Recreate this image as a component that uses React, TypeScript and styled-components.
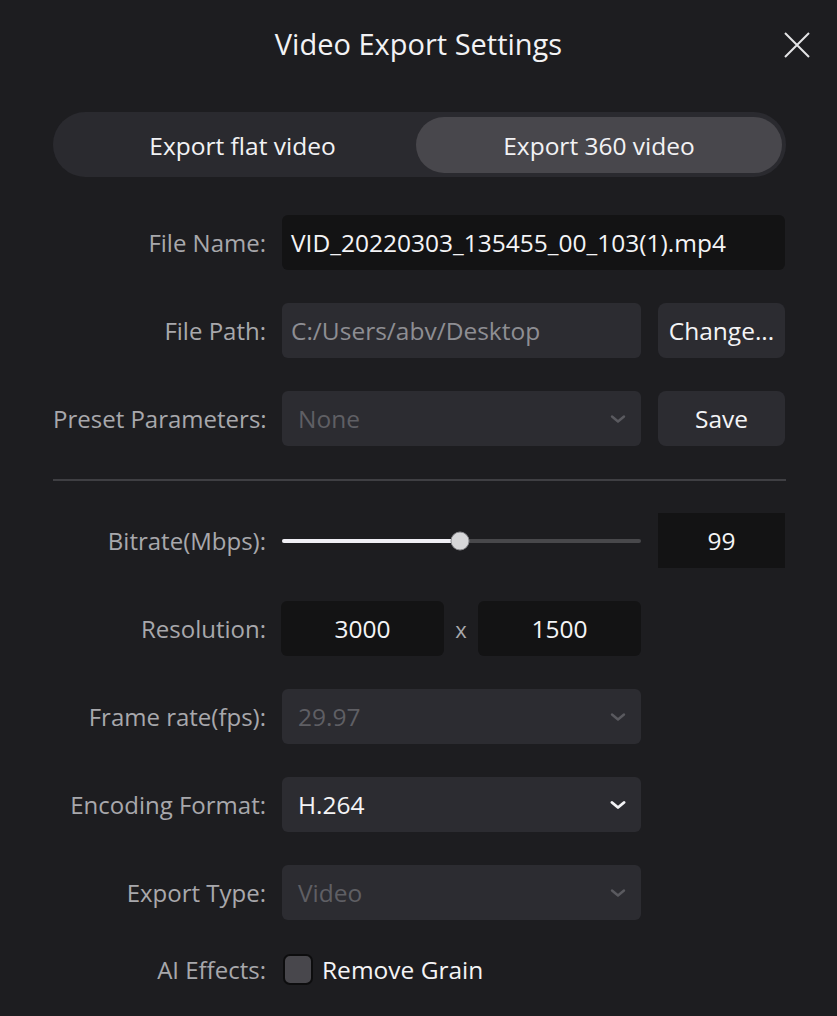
import React from "react";
import styled, { createGlobalStyle } from "styled-components";

const Global = createGlobalStyle`
  html, body { margin: 0; padding: 0; background: #1d1d20; }
  body { font-family: "Open Sans", "Noto Sans", sans-serif; -webkit-font-smoothing: antialiased; }
  * { box-sizing: border-box; }
`;

const Dialog = styled.div`
  width: 837px;
  height: 1016px;
  background: #1d1d20;
  padding: 0 51px 0 53px;
  display: flex;
  flex-direction: column;
  overflow: hidden;
`;

const Header = styled.div`
  position: relative;
  height: 90px;
  padding-bottom: 4px;
  display: flex;
  align-items: center;
  justify-content: center;
  margin: 0 -51px 0 -53px;
`;

const Title = styled.h1`
  margin: 0;
  font-size: 29px;
  font-weight: 400;
  color: #f2f2f4;
  letter-spacing: 0;
`;

const CloseButton = styled.button`
  position: absolute;
  right: 26px;
  top: 31px;
  width: 28px;
  height: 28px;
  padding: 0;
  border: none;
  background: transparent;
  display: flex;
  align-items: center;
  justify-content: center;
  cursor: pointer;
`;

const Tabs = styled.div`
  margin-top: 22px;
  height: 65px;
  border-radius: 33px;
  background: #2a2a2f;
  display: grid;
  grid-template-columns: 1fr 366px;
  padding: 5px 4px 4px 0;
`;

const Tab = styled.button<{ $active?: boolean }>`
  border: none;
  border-radius: 28px;
  background: ${(p) => (p.$active ? "#48474c" : "transparent")};
  color: #f2f2f4;
  font-family: inherit;
  font-size: 24.5px;
  padding: 0 0 0 ${(p) => (p.$active ? 0 : 16)}px;
  cursor: pointer;
`;

const Form = styled.div`
  margin-top: 38px;
  display: flex;
  flex-direction: column;
  gap: 33px;
`;

const Row = styled.div<{ $short?: boolean }>`
  display: grid;
  grid-template-columns: 213px 359px 128px;
  column-gap: 16px;
  height: ${(p) => (p.$short ? "32px" : "55px")};
  align-items: center;
  & > :nth-child(3) { margin-left: 1px; }
`;

const Label = styled.label`
  text-align: right;
  font-size: 24px;
  color: #a8a8ac;
  white-space: nowrap;
`;

const Field = styled.div<{ $dark?: boolean; $span?: boolean; $muted?: boolean }>`
  height: 55px;
  border-radius: 6px;
  background: ${(p) => (p.$dark ? "#131314" : "#2c2c31")};
  color: ${(p) => (p.$muted ? "#8e8e93" : "#f4f4f6")};
  font-size: 24.5px;
  display: flex;
  align-items: center;
  padding: 0 9px;
  grid-column: ${(p) => (p.$span ? "2 / 4" : "auto")};
  white-space: nowrap;
  overflow: hidden;
`;

const SideButton = styled.button`
  height: 55px;
  border: none;
  border-radius: 8px;
  background: #2c2c31;
  color: #f4f4f6;
  font-family: inherit;
  font-size: 24.5px;
  padding: 0;
  cursor: pointer;
  white-space: nowrap;
`;

const Select = styled.div<{ $disabled?: boolean }>`
  height: 55px;
  border-radius: 6px;
  background: #2c2c31;
  color: ${(p) => (p.$disabled ? "#5f5f64" : "#f4f4f6")};
  font-size: 24.5px;
  display: flex;
  align-items: center;
  justify-content: space-between;
  padding: 0 15px 0 16px;
`;

const Divider = styled.hr`
  margin: 0 0 -1px;
  border: none;
  height: 2px;
  background: #3f3f43;
`;

const SliderTrack = styled.div`
  position: relative;
  height: 4px;
  border-radius: 2px;
  background: #48484b;
`;

const SliderFill = styled.div`
  height: 100%;
  border-radius: 2px;
  background: #f0eff5;
`;

const SliderThumb = styled.div`
  position: absolute;
  top: 50%;
  width: 19px;
  height: 19px;
  border-radius: 50%;
  background: #d6d6d8;
  border: 1.5px solid #8a8a8e;
  transform: translate(-50%, -50%);
`;

const ValueBox = styled.div`
  height: 55px;
  background: #131314;
  color: #f4f4f6;
  font-size: 24.5px;
  display: flex;
  align-items: center;
  justify-content: center;
`;

const ResolutionGroup = styled.div`
  display: grid;
  grid-template-columns: 163px 1fr 163px;
  align-items: center;
  margin-left: -1px;
`;

const NumberBox = styled.div`
  height: 55px;
  border-radius: 6px;
  background: #131314;
  color: #f4f4f6;
  font-size: 24.5px;
  display: flex;
  align-items: center;
  justify-content: center;
`;

const Times = styled.span`
  text-align: center;
  color: #a9a9ad;
  font-size: 22px;
`;

const CheckRow = styled.div`
  display: flex;
  align-items: center;
  gap: 9px;
  margin-left: 1px;
  color: #f4f4f6;
  font-size: 24.5px;
  white-space: nowrap;
`;

const CheckBox = styled.span`
  width: 30px;
  height: 31px;
  border-radius: 7px;
  background: #48474c;
  border: 2px solid #0d0d0e;
`;

const Chevron = ({ disabled }: { disabled?: boolean }) => (
  <svg width="16" height="10" viewBox="0 0 16 10" fill="none">
    <path
      d="M2 2.5 L8 7.5 L14 2.5"
      stroke={disabled ? "#5a5a5f" : "#f4f4f6"}
      strokeWidth={disabled ? 2.4 : 2.9}
      strokeLinecap="round"
      strokeLinejoin="round"
    />
  </svg>
);

export default function App() {
  const bitrate = 0.495;
  return (
    <>
      <Global />
      <Dialog>
        <Header>
          <Title>Video Export Settings</Title>
          <CloseButton aria-label="Close">
            <svg width="28" height="28" viewBox="0 0 28 28">
              <path d="M2 2 L26 26 M26 2 L2 26" stroke="#e4e4e6" strokeWidth="2" />
            </svg>
          </CloseButton>
        </Header>
        <Tabs>
          <Tab>Export flat video</Tab>
          <Tab $active>Export 360 video</Tab>
        </Tabs>
        <Form>
          <Row>
            <Label>File Name:</Label>
            <Field $dark $span>VID_20220303_135455_00_103(1).mp4</Field>
          </Row>
          <Row>
            <Label>File Path:</Label>
            <Field $muted>C:/Users/abv/Desktop</Field>
            <SideButton>Change...</SideButton>
          </Row>
          <Row>
            <Label>Preset Parameters:</Label>
            <Select $disabled>
              None
              <Chevron disabled />
            </Select>
            <SideButton>Save</SideButton>
          </Row>
          <Divider />
          <Row>
            <Label>Bitrate(Mbps):</Label>
            <SliderTrack>
              <SliderFill style={{ width: `${bitrate * 100}%` }} />
              <SliderThumb style={{ left: `${bitrate * 100}%` }} />
            </SliderTrack>
            <ValueBox>99</ValueBox>
          </Row>
          <Row>
            <Label>Resolution:</Label>
            <ResolutionGroup>
              <NumberBox>3000</NumberBox>
              <Times>x</Times>
              <NumberBox>1500</NumberBox>
            </ResolutionGroup>
          </Row>
          <Row>
            <Label>Frame rate(fps):</Label>
            <Select $disabled>
              29.97
              <Chevron disabled />
            </Select>
          </Row>
          <Row>
            <Label>Encoding Format:</Label>
            <Select>
              H.264
              <Chevron />
            </Select>
          </Row>
          <Row>
            <Label>Export Type:</Label>
            <Select $disabled>
              Video
              <Chevron disabled />
            </Select>
          </Row>
          <Row $short>
            <Label>AI Effects:</Label>
            <CheckRow>
              <CheckBox />
              Remove Grain
            </CheckRow>
          </Row>
        </Form>
      </Dialog>
    </>
  );
}
